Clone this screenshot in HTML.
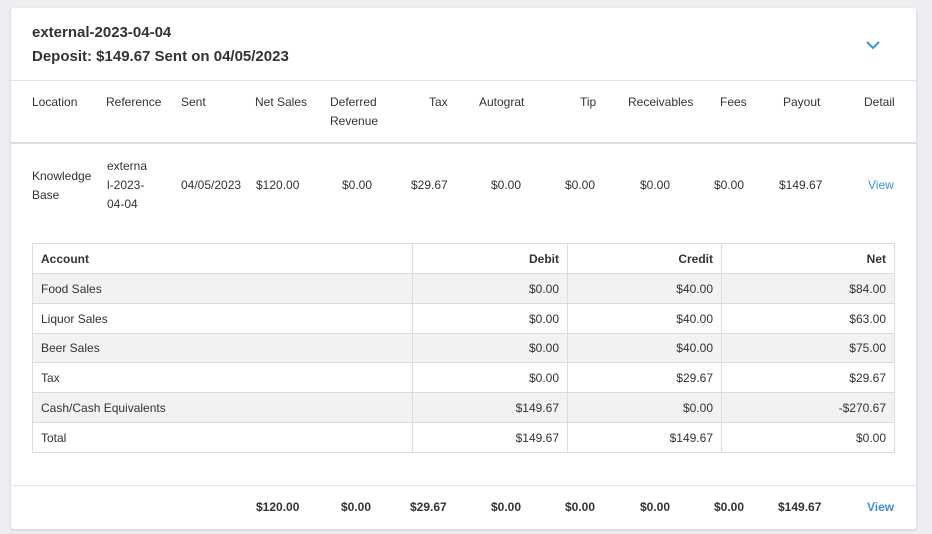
<!DOCTYPE html>
<html><head><style>
body{margin:0;width:932px;height:534px;background:#eceef1;font-family:"Liberation Sans",sans-serif;color:#333;position:relative;overflow:hidden}
.card{position:absolute;left:11px;top:8px;width:905px;height:521px;background:#fff;border-radius:3px;box-shadow:0 1px 3px rgba(0,0,0,.15)}
.t{position:absolute;font-size:12px;white-space:nowrap;line-height:19px}
.b{font-weight:bold}
.blue{color:#3d8fe0}
table{position:absolute;left:32px;top:243px;width:863px;border-collapse:collapse;font-size:12px}
td{border:1px solid #dcdcdc;height:29px;padding:0 8px;line-height:14px;box-sizing:border-box}
td.r{text-align:right}
tr.g td{background:#f2f2f2}
</style></head><body>
<div class="card"></div>
<div class="t b" style="left:32px;top:23px;font-size:15px">external-2023-04-04</div>
<div class="t b" style="left:32px;top:47px;font-size:15px">Deposit: $149.67 Sent on 04/05/2023</div>
<svg style="position:absolute;left:865px;top:39px" width="16" height="12"><path d="M2 3 L8 9 L14 3" fill="none" stroke="#3d8fe0" stroke-width="2"/></svg>
<div style="position:absolute;left:11px;top:80px;width:905px;height:1px;background:#e2e2e2"></div>
<div style="position:absolute;left:11px;top:142px;width:905px;height:2px;background:#ddd"></div>
<div class="t" style="left:32px;top:93px">Location</div>
<div class="t" style="left:106px;top:93px">Reference</div>
<div class="t" style="left:181px;top:93px">Sent</div>
<div class="t" style="left:255px;top:93px">Net Sales</div>
<div class="t" style="left:330px;top:93px">Deferred<br>Revenue</div>
<div class="t" style="left:429px;top:93px">Tax</div>
<div class="t" style="left:479px;top:93px">Autograt</div>
<div class="t" style="left:580px;top:93px">Tip</div>
<div class="t" style="left:628px;top:93px">Receivables</div>
<div class="t" style="left:720px;top:93px">Fees</div>
<div class="t" style="left:783px;top:93px">Payout</div>
<div class="t" style="left:864px;top:93px">Detail</div>

<div class="t" style="left:32px;top:167px">Knowledge<br>Base</div>
<div class="t" style="left:107px;top:157px">externa<br>l-2023-<br>04-04</div>
<div class="t" style="left:181px;top:176px">04/05/2023</div>
<div class="t" style="left:256px;top:176px">$120.00</div>
<div class="t" style="left:342px;top:176px">$0.00</div>
<div class="t" style="left:411px;top:176px">$29.67</div>
<div class="t" style="left:491px;top:176px">$0.00</div>
<div class="t" style="left:565px;top:176px">$0.00</div>
<div class="t" style="left:640px;top:176px">$0.00</div>
<div class="t" style="left:714px;top:176px">$0.00</div>
<div class="t" style="left:779px;top:176px">$149.67</div>
<div class="t blue" style="left:868px;top:176px">View</div>

<table>
<tr><td class="b" style="width:380px;height:30px">Account</td><td class="r b" style="width:155px">Debit</td><td class="r b" style="width:154px">Credit</td><td class="r b">Net</td></tr>
<tr class="g"><td style="height:30px">Food Sales</td><td class="r">$0.00</td><td class="r">$40.00</td><td class="r">$84.00</td></tr>
<tr><td style="height:30px">Liquor Sales</td><td class="r">$0.00</td><td class="r">$40.00</td><td class="r">$63.00</td></tr>
<tr class="g"><td>Beer Sales</td><td class="r">$0.00</td><td class="r">$40.00</td><td class="r">$75.00</td></tr>
<tr><td style="height:30px">Tax</td><td class="r">$0.00</td><td class="r">$29.67</td><td class="r">$29.67</td></tr>
<tr class="g"><td style="height:30px">Cash/Cash Equivalents</td><td class="r">$149.67</td><td class="r">$0.00</td><td class="r">-$270.67</td></tr>
<tr><td style="height:30px">Total</td><td class="r">$149.67</td><td class="r">$149.67</td><td class="r">$0.00</td></tr>
</table>

<div style="position:absolute;left:11px;top:485px;width:905px;height:1px;background:#e2e2e2"></div>
<div class="t b" style="left:256px;top:498px">$120.00</div>
<div class="t b" style="left:341px;top:498px">$0.00</div>
<div class="t b" style="left:410px;top:498px">$29.67</div>
<div class="t b" style="left:491px;top:498px">$0.00</div>
<div class="t b" style="left:565px;top:498px">$0.00</div>
<div class="t b" style="left:640px;top:498px">$0.00</div>
<div class="t b" style="left:714px;top:498px">$0.00</div>
<div class="t b" style="left:778px;top:498px">$149.67</div>
<div class="t b blue" style="left:867px;top:498px">View</div>
</body></html>
